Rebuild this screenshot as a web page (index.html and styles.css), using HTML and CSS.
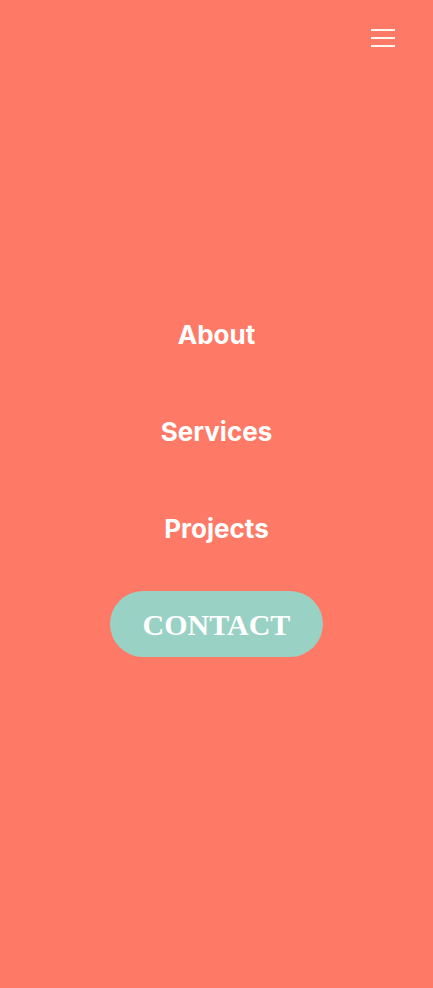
FILE: index.html
```html
<!DOCTYPE html>
<html lang="en">
<head>
<meta charset="utf-8">
<title>Menu</title>
<link rel="stylesheet" href="styles.css">
</head>
<body>
<div class="page">
  <header class="topbar">
    <button class="burger" aria-label="Menu">
      <span class="line"></span>
      <span class="line"></span>
      <span class="line"></span>
    </button>
  </header>
  <nav class="menu">
    <a class="item" href="#">About</a>
    <a class="item" href="#">Services</a>
    <a class="item" href="#">Projects</a>
    <div class="slot"><a class="cta" href="#">CONTACT</a></div>
  </nav>
</div>
</body>
</html>
```
FILE: styles.css
```css
html, body {
  margin: 0;
  padding: 0;
}
body {
  background: #ff7a66;
  font-family: "Inter", "Roboto", sans-serif;
}
.page {
  min-height: 988px;
  display: flex;
  flex-direction: column;
}
.topbar {
  height: 76px;
  display: flex;
  justify-content: flex-end;
  align-items: flex-start;
  padding: 29px 38px 0 0;
  box-sizing: border-box;
}
.burger {
  width: 24px;
  height: 18px;
  padding: 0;
  border: 0;
  background: none;
  display: flex;
  flex-direction: column;
  justify-content: space-between;
}
.line {
  display: block;
  width: 24px;
  height: 2px;
  background: #fff6f0;
}
.menu {
  margin-top: 210px;
  display: flex;
  flex-direction: column;
  align-items: center;
}
.item {
  height: 97px;
  display: flex;
  align-items: center;
  justify-content: center;
  color: #fff;
  text-decoration: none;
  font-size: 26px;
  font-weight: 700;
}
.slot {
  height: 97px;
  display: flex;
  align-items: flex-start;
  padding-top: 14px;
  box-sizing: border-box;
}
.cta {
  width: 213px;
  height: 66px;
  border-radius: 33px;
  background: #99d1c4;
  color: #fff;
  text-decoration: none;
  display: flex;
  align-items: center;
  justify-content: center;
  font-family: "Liberation Serif", "DejaVu Serif", serif;
  font-weight: 700;
  font-size: 30px;
  padding-top: 2px;
  box-sizing: border-box;
}
```
